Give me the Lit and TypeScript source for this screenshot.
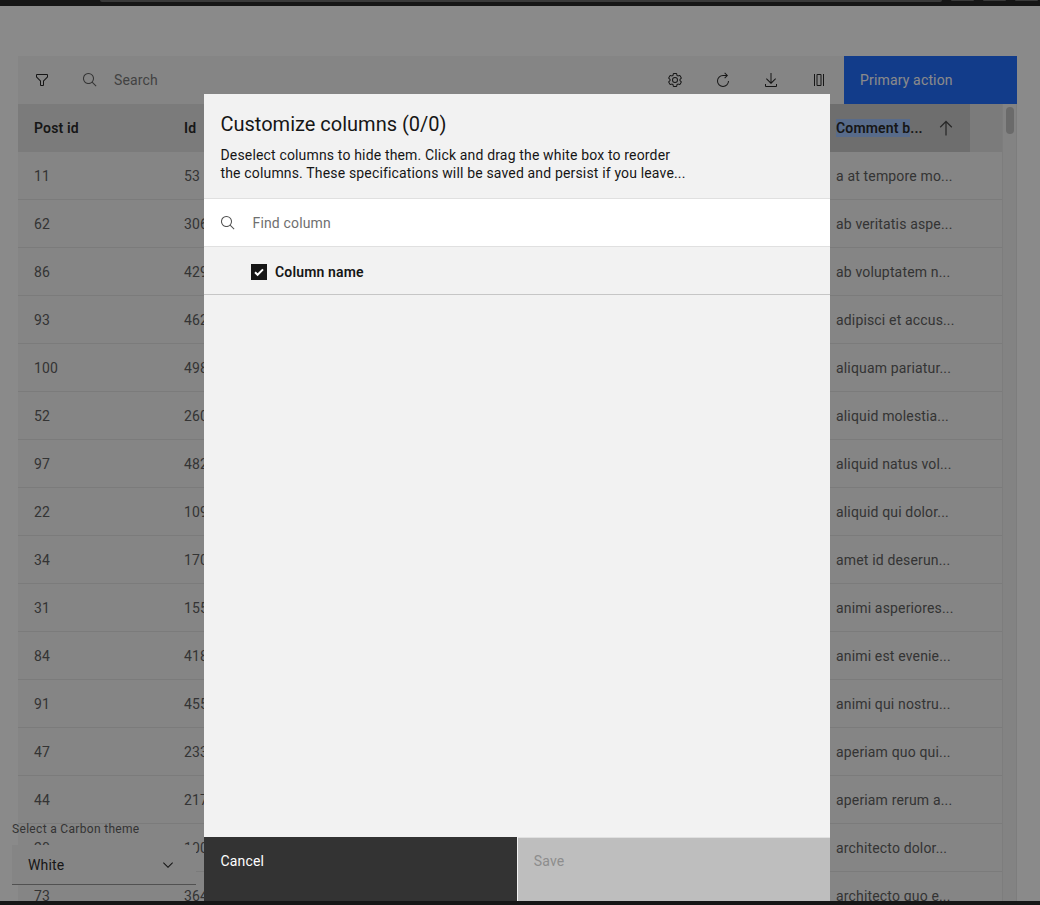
import { LitElement, html, css } from "lit";
import { customElement } from "lit/decorators.js";

const rows: [string, string, string][] = [
  ["11", "53", "a at tempore mo..."],
  ["62", "306", "ab veritatis aspe..."],
  ["86", "429", "ab voluptatem n..."],
  ["93", "462", "adipisci et accus..."],
  ["100", "498", "aliquam pariatur..."],
  ["52", "260", "aliquid molestia..."],
  ["97", "482", "aliquid natus vol..."],
  ["22", "109", "aliquid qui dolor..."],
  ["34", "170", "amet id deserun..."],
  ["31", "155", "animi asperiores..."],
  ["84", "418", "animi est evenie..."],
  ["91", "455", "animi qui nostru..."],
  ["47", "233", "aperiam quo qui..."],
  ["44", "217", "aperiam rerum a..."],
  ["20", "100", "architecto dolor..."],
  ["73", "364", "architecto quo e..."],
];

const icon = (d: string, size = 16) => html`<svg class="ic" viewBox="0 0 32 32" width=${size} height=${size} fill="currentColor"><path d=${d}></path></svg>`;
const SEARCH = "M29 27.5859l-7.5521-7.5521a11.0177 11.0177 0 10-1.4141 1.4141L27.5859 29ZM4 13a9 9 0 119 9A9.01 9.01 0 014 13Z";
const FILTER = "M18,28H14a2,2,0,0,1-2-2V18.41L4.59,11A2,2,0,0,1,4,9.59V6A2,2,0,0,1,6,4H26a2,2,0,0,1,2,2V9.59A2,2,0,0,1,27.41,11L20,18.41V26A2,2,0,0,1,18,28ZM6,6V9.59l8,8V26h4V17.59l8-8V6Z";
const GEAR = "M27,16.76c0-.25,0-.5,0-.76s0-.51,0-.77l1.92-1.68A2,2,0,0,0,29.3,11L26.94,7a2,2,0,0,0-1.73-1,2,2,0,0,0-.64.1l-2.43.82a11.35,11.35,0,0,0-1.31-.75l-.51-2.52a2,2,0,0,0-2-1.61H13.64a2,2,0,0,0-2,1.61l-.51,2.52a11.48,11.48,0,0,0-1.32.75L7.43,6.06A2,2,0,0,0,6.79,6,2,2,0,0,0,5.06,7L2.7,11a2,2,0,0,0,.41,2.51L5,15.24c0,.25,0,.5,0,.76s0,.51,0,.77L3.11,18.45A2,2,0,0,0,2.7,21L5.06,25a2,2,0,0,0,1.73,1,2,2,0,0,0,.64-.1l2.43-.82a11.35,11.35,0,0,0,1.31.75l.51,2.52a2,2,0,0,0,2,1.61h4.72a2,2,0,0,0,2-1.61l.51-2.52a11.48,11.48,0,0,0,1.32-.75l2.42.82a2,2,0,0,0,.64.1,2,2,0,0,0,1.73-1L29.3,21a2,2,0,0,0-.41-2.51ZM25.21,24l-3.43-1.16a8.86,8.86,0,0,1-2.71,1.57L18.36,28H13.64l-.71-3.55a9.36,9.36,0,0,1-2.7-1.57L6.79,24,4.43,20l2.72-2.4a8.9,8.9,0,0,1,0-3.13L4.43,12,6.79,8l3.43,1.16a8.86,8.86,0,0,1,2.71-1.57L13.64,4h4.72l.71,3.55a9.36,9.36,0,0,1,2.7,1.57L25.21,8,27.57,12l-2.72,2.4a8.9,8.9,0,0,1,0,3.13L27.57,20ZM16,22a6,6,0,1,1,6-6A5.94,5.94,0,0,1,16,22Zm0-10a3.91,3.91,0,0,0-4,4,3.91,3.91,0,0,0,4,4,3.91,3.91,0,0,0,4-4A3.91,3.91,0,0,0,16,12Z";
const ROTATE = "M26,18A10,10,0,1,1,16,8h6.18L18.6,11.59,20,13l6-6L20,1,18.6,2.41,22.19,6H16A12,12,0,1,0,28,18Z";
const DOWNLOAD = "M26 24v4H6V24H4v4H4a2 2 0 002 2H26a2 2 0 002-2h0V24zM26 14L24.59 12.59 17 20.17 17 2 15 2 15 20.17 7.41 12.59 6 14 16 24 26 14z";
const COLUMN = "M6 4h2v24H6zM24 4h2v24h-2zM13 4h6a2 2 0 012 2v20a2 2 0 01-2 2h-6a2 2 0 01-2-2V6a2 2 0 012-2zM13 6v20h6V6z";
const ARROW = "M16 4L6 14 7.41 15.41 15 7.83 15 28 17 28 17 7.83 24.59 15.41 26 14 16 4z";
const CHEVRON = "M16 22L6 12 7.4 10.6 16 19.2 24.6 10.6 26 12z";

@customElement("app-root")
export class AppRoot extends LitElement {
  static styles = css`
    :host {
      display: block;
      position: relative;
      width: 1040px;
      height: 905px;
      overflow: hidden;
      background: #161616;
      font-family: Roboto, "Noto Sans", sans-serif;
      font-size: 14px;
      color: #161616;
    }
    .chrome { height: 6px; display: flex; gap: 9px; padding-left: 100px; background: #161616; }
    .chrome span { height: 2px; background: #3a3a3a; border-radius: 0 0 2px 2px; }
    .chrome .url { width: 842px; }
    .chrome .b { width: 23px; height: 1px; }
    .page {
      height: 895px;
      background: #fff;
      overflow: hidden;
      padding: 50px 23px 0 18px;
      box-sizing: border-box;
      position: relative;
    }
    .toolbar { display: flex; align-items: center; height: 48px; background: #f4f4f4; }
    .tool { width: 48px; height: 48px; display: flex; align-items: center; justify-content: center; flex: none; }
    .tool.muted { color: #525252; }
    .search-ph { flex: 1; color: #6f6f6f; letter-spacing: 0.16px; }
    .primary {
      width: 173px;
      height: 48px;
      margin-left: 1px;
      flex: none;
      background: #0f62fe;
      color: #fff;
      display: flex;
      align-items: center;
      padding-left: 16px;
      box-sizing: border-box;
      letter-spacing: 0.16px;
    }
    .body { display: flex; }
    .table { width: 984px; flex: none; }
    .scroll {
      width: 15px;
      background: #f0f0f0;
      border-left: 1px solid #e4e4e4;
      border-right: 1px solid #e4e4e4;
      height: 800px;
      box-sizing: border-box;
      padding: 3px 2px 3px 3px;
    }
    .thumb { height: 27px; border-radius: 4px; background: #bebebe; }
    .row {
      display: grid;
      grid-template-columns: 150px 1fr 172px;
      height: 48px;
      box-sizing: border-box;
      align-items: center;
      background: #f4f4f4;
      border-bottom: 1px solid #e0e0e0;
      color: #525252;
      letter-spacing: 0.16px;
      padding-left: 16px;
    }
    .row .last { padding-left: 6px; white-space: nowrap; }
    .head { background: #e0e0e0; border-bottom: 0; color: #161616; font-weight: 600; }
    .head .sorted {
      height: 48px;
      width: 140px;
      background: #c6c6c6;
      padding-left: 6px;
      box-sizing: border-box;
      display: flex;
      align-items: center;
      white-space: nowrap;
    }
    .mark { background: #9ac0ff; line-height: 18px; }
    .sort-ic { margin-left: auto; margin-right: 14px; display: flex; color: #393939; }
    .overlay { position: absolute; inset: 0; background: rgba(22, 22, 22, 0.5); }
    .theme { position: absolute; left: 12px; top: 815px; width: 184px; color: #525252; }
    .theme label { display: block; font-size: 12px; line-height: 16px; letter-spacing: 0.32px; margin-bottom: 8px; }
    .select {
      height: 40px;
      box-sizing: border-box;
      background: #f4f4f4;
      border-bottom: 1px solid #8d8d8d;
      display: flex;
      align-items: center;
      justify-content: space-between;
      padding: 0 20px 0 16px;
      color: #161616;
      letter-spacing: 0.16px;
    }
    .modal {
      position: absolute;
      left: 204px;
      top: 88px;
      width: 626px;
      height: 807px;
      background: #f2f2f2;
      display: flex;
      flex-direction: column;
    }
    .m-head {
      height: 105px;
      box-sizing: border-box;
      padding: 16px 16px 0 16.5px;
      border-bottom: 1px solid #e0e0e0;
      flex: none;
    }
    .m-head h2 { margin: 0; font-size: 20px; font-weight: 400; line-height: 28px; color: #161616; }
    .m-head p { margin: 8px 0 0; line-height: 18px; width: 470px; color: #161616; letter-spacing: 0.16px; }
    .find {
      height: 48px;
      box-sizing: border-box;
      background: #fff;
      border-bottom: 1px solid #e0e0e0;
      display: flex;
      align-items: center;
      gap: 16.5px;
      padding-left: 16px;
      flex: none;
      color: #6f6f6f;
      letter-spacing: 0.16px;
    }
    .find .ic { color: #525252; }
    .col {
      height: 48px;
      box-sizing: border-box;
      border-bottom: 1px solid #c6c6c6;
      display: flex;
      align-items: center;
      gap: 8px;
      padding: 3px 0 0 47px;
      font-weight: 600;
      letter-spacing: 0.16px;
      flex: none;
    }
    .box { width: 16px; height: 16px; background: #161616; display: flex; align-items: center; justify-content: center; color: #fff; }
    .spacer { flex: 1; }
    .foot { display: flex; height: 64px; flex: none; gap: 1px; }
    .foot div { flex: 1; box-sizing: border-box; line-height: 20px; letter-spacing: 0.16px; }
    .cancel { background: #333333; color: #fff; padding: 14px 16px 0 16.5px; }
    .save { background: #bebebe; color: #8d8d8d; border-top: 1px solid #e0e0e0; padding: 13px 16px 0 16px; }
    .bottom { height: 4px; background: #161616; }
  `;

  render() {
    return html`
      <div class="chrome"><span class="url"></span><span class="b"></span><span class="b"></span><span class="b"></span></div>
      <div class="page">
        <div class="toolbar">
          <div class="tool">${icon(FILTER)}</div>
          <div class="tool muted">${icon(SEARCH)}</div>
          <div class="search-ph">Search</div>
          <div class="tool">${icon(GEAR)}</div>
          <div class="tool">${icon(ROTATE)}</div>
          <div class="tool">${icon(DOWNLOAD)}</div>
          <div class="tool">${icon(COLUMN)}</div>
          <div class="primary">Primary action</div>
        </div>
        <div class="body">
          <div class="table">
            <div class="row head">
              <div>Post id</div><div>Id</div>
              <div class="sorted"><span class="mark">Comment b</span>...<span class="sort-ic">${icon(ARROW, 20)}</span></div>
            </div>
            ${rows.map((r) => html`<div class="row"><div>${r[0]}</div><div>${r[1]}</div><div class="last">${r[2]}</div></div>`)}
          </div>
          <div class="scroll"><div class="thumb"></div></div>
        </div>
        <div class="theme">
          <label>Select a Carbon theme</label>
          <div class="select"><span>White</span>${icon(CHEVRON)}</div>
        </div>
        <div class="overlay"></div>
        <div class="modal">
          <div class="m-head">
            <h2>Customize columns (0/0)</h2>
            <p>Deselect columns to hide them. Click and drag the white box to reorder the columns. These specifications will be saved and persist if you leave...</p>
          </div>
          <div class="find">${icon(SEARCH)}<span>Find column</span></div>
          <div class="col">
            <span class="box"><svg viewBox="0 0 16 16" width="16" height="16"><path d="M4 8.2l2.6 2.6L12 5.4" fill="none" stroke="currentColor" stroke-width="2"></path></svg></span>
            <span>Column name</span>
          </div>
          <div class="spacer"></div>
          <div class="foot"><div class="cancel">Cancel</div><div class="save">Save</div></div>
        </div>
      </div>
      <div class="bottom"></div>
    `;
  }
}
